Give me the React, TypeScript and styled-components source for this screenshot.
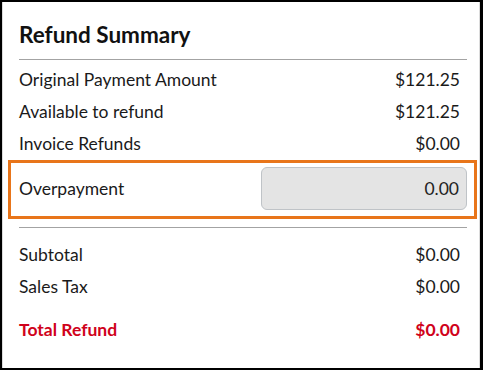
import React from "react";
import styled, { createGlobalStyle } from "styled-components";

const Global = createGlobalStyle`
  html, body { margin: 0; padding: 0; background: #fff; }
  body { font-family: Lato, "Open Sans", Arial, sans-serif; color: #1a1a1a; }
  * { box-sizing: border-box; }
`;

const Frame = styled.div`
  width: 483px;
  height: 370px;
  border-style: solid;
  border-color: #000;
  border-width: 2px 3px 2px 2px;
  background: #fff;
  display: flex;
`;

const Card = styled.section`
  flex: 1;
  border-left: 1px solid #dcdcdc;
  border-right: 1px solid #dcdcdc;
  padding: 19px 12px 0 16px;
  display: flex;
  flex-direction: column;
`;

const Title = styled.h2`
  margin: 0;
  font-family: Lato, sans-serif;
  font-weight: 700;
  font-size: 22.5px;
  line-height: 28px;
  color: #111;
`;

const Rule = styled.hr<{ $top: number }>`
  margin: ${(p) => p.$top}px 0 0 0;
  border: 0;
  height: 1px;
  background: #a3a3a3;
`;

const Rows = styled.div<{ $top: number }>`
  margin-top: ${(p) => p.$top}px;
  display: flex;
  flex-direction: column;
`;

const Row = styled.div<{ $total?: boolean; $top?: number }>`
  display: flex;
  justify-content: space-between;
  align-items: center;
  height: 32px;
  line-height: 32px;
  padding-right: 7px;
  font-size: 17.5px;
  margin-top: ${(p) => p.$top ?? 0}px;
  font-weight: ${(p) => (p.$total ? 700 : 400)};
  color: ${(p) => (p.$total ? "#d0021b" : "#1a1a1a")};
`;

const Highlight = styled.div`
  margin: 0 -10px 0 -11px;
  border: 3px solid #e8751a;
  padding: 4px 7px 6px 8px;
  display: flex;
  justify-content: space-between;
  align-items: center;
  font-size: 17.5px;
`;

const AmountInput = styled.input`
  width: 206px;
  height: 43px;
  border: 1px solid #bfc3c7;
  border-radius: 6px;
  background: #e4e4e4;
  text-align: right;
  padding: 0 7px 0 8px;
  font-family: Lato, sans-serif;
  font-size: 17.5px;
  color: #222;
  outline: none;
`;

const top = [
  ["Original Payment Amount", "$121.25"],
  ["Available to refund", "$121.25"],
  ["Invoice Refunds", "$0.00"],
];

const bottom = [
  ["Subtotal", "$0.00"],
  ["Sales Tax", "$0.00"],
];

export default function App() {
  return (
    <>
      <Global />
      <Frame>
        <Card>
          <Title>Refund Summary</Title>
          <Rule $top={10} />
          <Rows $top={4}>
            {top.map(([l, v]) => (
              <Row key={l}>
                <span>{l}</span>
                <span>{v}</span>
              </Row>
            ))}
          </Rows>
          <Highlight>
            <span>Overpayment</span>
            <AmountInput readOnly value="0.00" />
          </Highlight>
          <Rule $top={8} />
          <Rows $top={11}>
            {bottom.map(([l, v]) => (
              <Row key={l}>
                <span>{l}</span>
                <span>{v}</span>
              </Row>
            ))}
            <Row $total $top={11}>
              <span>Total Refund</span>
              <span>$0.00</span>
            </Row>
          </Rows>
        </Card>
      </Frame>
    </>
  );
}
